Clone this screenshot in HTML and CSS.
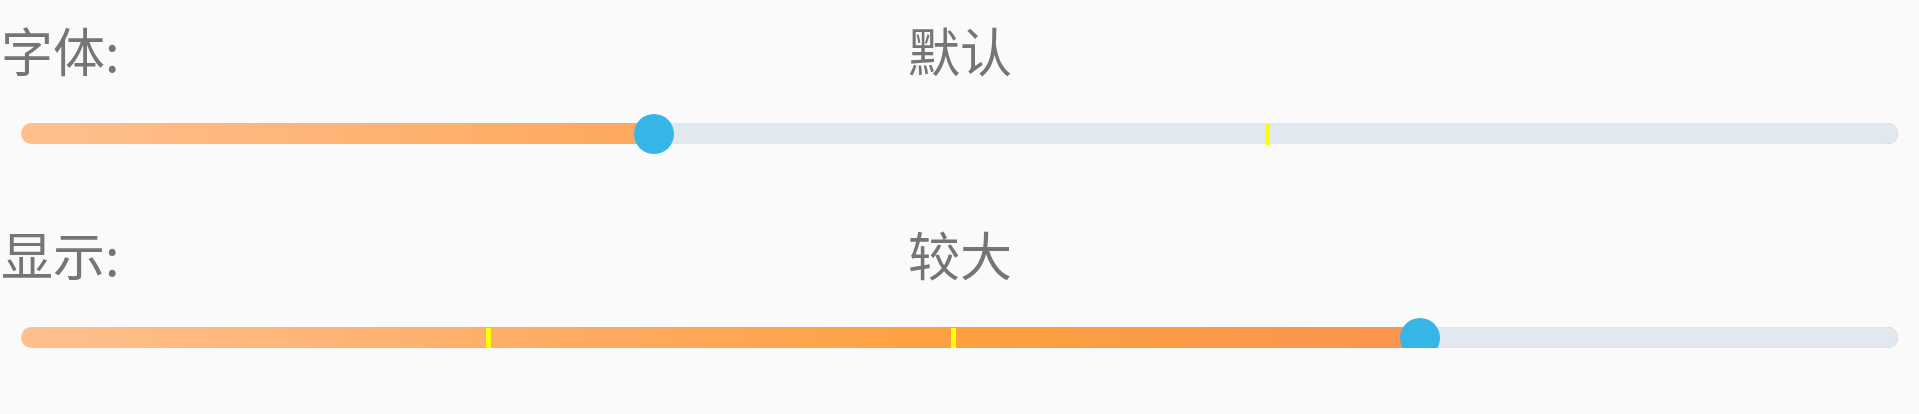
FILE: index.html
```html
<!DOCTYPE html>
<html lang="zh">
<head>
    <meta charset="UTF-8">
    <meta name="viewport" content="width=device-width, initial-scale=1.0">
    <title>显示设置</title>
    <link rel="stylesheet" href="styles.css">
</head>
<body>
    <div class="settings">
        <div class="setting">
            <div class="setting-head">
                <span class="label">字体:</span>
                <span class="value">默认</span>
            </div>
            <div class="slider">
                <div class="track">
                    <div class="rest" style="width: 66.28%"></div>
                </div>
                <div class="tick" style="left: 66.28%"></div>
                <div class="knob" style="left: 33.72%"></div>
            </div>
        </div>

        <div class="setting">
            <div class="setting-head">
                <span class="label">显示:</span>
                <span class="value">较大</span>
            </div>
            <div class="slider">
                <div class="track">
                    <div class="rest" style="width: 25.47%"></div>
                </div>
                <div class="tick" style="left: 24.77%"></div>
                <div class="tick" style="left: 49.55%"></div>
                <div class="knob" style="left: 74.53%"></div>
            </div>
        </div>
    </div>
</body>
</html>
```

FILE: styles.css
```css
body {
    margin: 0;
    background-color: #fafafa;
    font-family: "Noto Sans CJK SC", "Noto Sans", sans-serif;
    color: #757575;
}

.settings {
    display: flex;
    flex-direction: column;
    gap: 84px;
    padding-top: 24px;
}

.setting {
    display: flex;
    flex-direction: column;
    gap: 47px;
}

.setting-head {
    display: grid;
    grid-template-columns: 1fr auto 1fr;
    font-size: 52px;
    line-height: 52px;
    padding-left: 1px;
}

.value {
    grid-column: 2;
}

.slider {
    position: relative;
    margin: 0 21px;
    height: 21px;
}

.track {
    display: flex;
    justify-content: flex-end;
    height: 100%;
    border-radius: 11px;
    overflow: hidden;
    background: linear-gradient(to right, #ffc08e 0%, #fdab62 30%, #fda03f 50%, #fb9450 75%, #fa8c55 100%);
}

.rest {
    height: 100%;
    background-color: #e1e8f0;
}

/* step marks sit on top of the bar */
.tick {
    position: absolute;
    top: 1px;
    width: 5px;
    height: 21px;
    background-color: #ffff00;
}

.knob {
    position: absolute;
    top: 50%;
    width: 40px;
    height: 40px;
    margin: -20px 0 0 -20px;
    border-radius: 50%;
    background-color: #35b6e6;
}
```
